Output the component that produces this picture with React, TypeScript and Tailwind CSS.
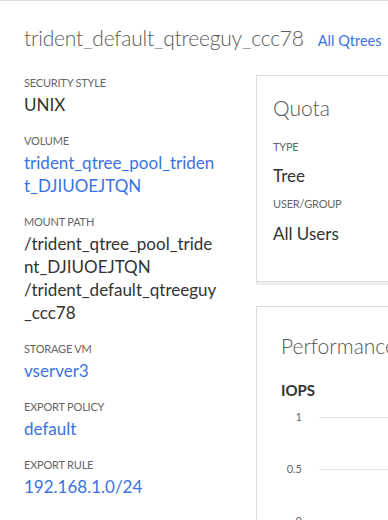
import React from 'react';

const font = { fontFamily: 'Lato, "Open Sans", sans-serif' };

interface IFieldProps {
  label: string;
  lines: string[];
  isLink?: boolean;
}

function Field({ label, lines, isLink }: IFieldProps) {
  const valueColor = isLink ? 'text-[#3a72e4]' : 'text-[#333]';

  return (
    <div className="flex flex-col">
      <span className="text-[11px] leading-[16px] tracking-[-0.2px] uppercase text-[#666]">{label}</span>
      <div className={`mt-[2px] flex flex-col text-[17px] leading-[23px] whitespace-nowrap ${valueColor}`}>
        {lines.map((line) => <span key={line}>{line}</span>)}
      </div>
    </div>
  );
}

function QuotaCard() {
  return (
    <div className="w-[360px] border border-[#ddd] bg-white px-4 pt-4 pb-[35px] shadow-[0_3px_0_#eee]">
      <h2 className="text-[21px] leading-[32px] font-light text-[#555]">Quota</h2>
      <div className="mt-[15px] text-[11px] leading-[16px] tracking-[-0.2px] text-[#666]">TYPE</div>
      <div className="mt-[9px] text-[17px] leading-[24px] text-[#333]">Tree</div>
      <div className="mt-[8px] text-[11px] leading-[16px] tracking-[-0.2px] text-[#666]">USER/GROUP</div>
      <div className="mt-[10px] text-[17px] leading-[24px] text-[#333]">All Users</div>
    </div>
  );
}

function PerformanceCard() {
  return (
    <div className="mt-6 w-[360px] h-[260px] border border-[#ddd] bg-white px-6 pt-[23px]">
      <h2 className="text-[21px] leading-[32px] font-light text-[#555] whitespace-nowrap">Performance</h2>
      <div className="mt-[18px] text-[15px] leading-[20px] font-bold text-[#333]">IOPS</div>

      {/* chart */}
      <div className="mt-[7px] flex flex-col gap-[32px]">
        {['1', '0.5', '0'].map((tick) => (
          <div key={tick} className="flex items-center h-[20px]">
            <span className="w-[21px] text-right text-[11px] text-[#666]">{tick}</span>
            <span className="ml-[17px] flex-1 h-px bg-[#e2e2e2]" />
          </div>
        ))}
      </div>
    </div>
  );
}

export default function App() {
  return (
    <div className="h-[520px] w-full overflow-hidden bg-white border-t border-[#ddd]" style={font}>
      <div className="px-6 pt-[23px]">
        <div className="flex items-baseline whitespace-nowrap">
          <h1 className="text-[21px] leading-[28px] font-light tracking-[-0.2px] text-[#5a5a5a]">
            trident_default_qtreeguy_ccc78
          </h1>
          <a className="ml-[14px] text-[14.5px] text-[#3a72e4]">All Qtrees</a>
        </div>

        <main className="mt-[23px] flex">
          {/* Left */}
          <div className="w-[200px] shrink-0 flex flex-col gap-[17px]">
            <Field label="Security Style" lines={['UNIX']} />
            <Field label="Volume" isLink lines={['trident_qtree_pool_triden', 't_DJIUOEJTQN']} />
            <Field
              label="Mount Path"
              lines={['/trident_qtree_pool_tride', 'nt_DJIUOEJTQN', '/trident_default_qtreeguy', '_ccc78']}
            />
            <Field label="Storage VM" isLink lines={['vserver3']} />
            <Field label="Export Policy" isLink lines={['default']} />
            <Field label="Export Rule" isLink lines={['192.168.1.0/24']} />
          </div>

          {/* Right */}
          <div className="ml-8 shrink-0">
            <QuotaCard />
            <PerformanceCard />
          </div>
        </main>
      </div>
    </div>
  );
}
